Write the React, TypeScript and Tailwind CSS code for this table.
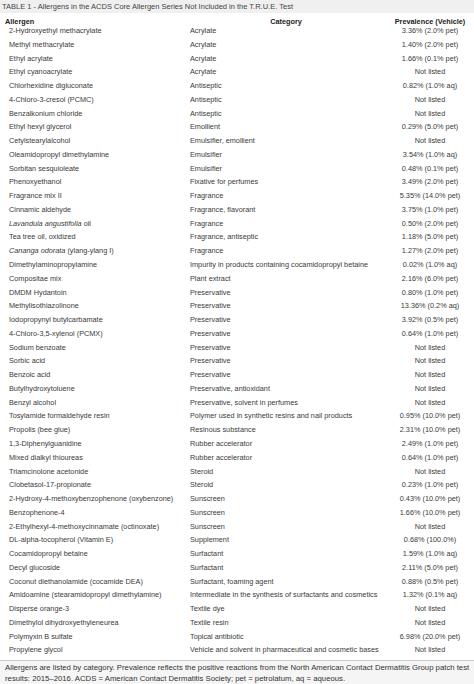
const rows: [string, string, string, boolean?][] = [
  ["2-Hydroxyethyl methacrylate", "Acrylate", "3.36% (2.0% pet)"],
  ["Methyl methacrylate", "Acrylate", "1.40% (2.0% pet)"],
  ["Ethyl acrylate", "Acrylate", "1.66% (0.1% pet)"],
  ["Ethyl cyanoacrylate", "Acrylate", "Not listed"],
  ["Chlorhexidine digluconate", "Antiseptic", "0.82% (1.0% aq)"],
  ["4-Chloro-3-cresol (PCMC)", "Antiseptic", "Not listed"],
  ["Benzalkonium chloride", "Antiseptic", "Not listed"],
  ["Ethyl hexyl glycerol", "Emollient", "0.29% (5.0% pet)"],
  ["Cetylstearylalcohol", "Emulsifier, emollient", "Not listed"],
  ["Oleamidopropyl dimethylamine", "Emulsifier", "3.54% (1.0% aq)"],
  ["Sorbitan sesquioleate", "Emulsifier", "0.48% (0.1% pet)"],
  ["Phenoxyethanol", "Fixative for perfumes", "3.49% (2.0% pet)"],
  ["Fragrance mix II", "Fragrance", "5.35% (14.0% pet)"],
  ["Cinnamic aldehyde", "Fragrance, flavorant", "3.75% (1.0% pet)"],
  ["Lavandula angustifolia oil", "Fragrance", "0.50% (2.0% pet)", true],
  ["Tea tree oil, oxidized", "Fragrance, antiseptic", "1.18% (5.0% pet)"],
  ["Cananga odorata (ylang-ylang I)", "Fragrance", "1.27% (2.0% pet)", true],
  ["Dimethylaminopropylamine", "Impurity in products containing cocamidopropyl betaine", "0.02% (1.0% aq)"],
  ["Compositae mix", "Plant extract", "2.16% (6.0% pet)"],
  ["DMDM Hydantoin", "Preservative", "0.80% (1.0% pet)"],
  ["Methylisothiazolinone", "Preservative", "13.36% (0.2% aq)"],
  ["Iodopropynyl butylcarbamate", "Preservative", "3.92% (0.5% pet)"],
  ["4-Chloro-3,5-xylenol (PCMX)", "Preservative", "0.64% (1.0% pet)"],
  ["Sodium benzoate", "Preservative", "Not listed"],
  ["Sorbic acid", "Preservative", "Not listed"],
  ["Benzoic acid", "Preservative", "Not listed"],
  ["Butylhydroxytoluene", "Preservative, antioxidant", "Not listed"],
  ["Benzyl alcohol", "Preservative, solvent in perfumes", "Not listed"],
  ["Tosylamide formaldehyde resin", "Polymer used in synthetic resins and nail products", "0.95% (10.0% pet)"],
  ["Propolis (bee glue)", "Resinous substance", "2.31% (10.0% pet)"],
  ["1,3-Diphenylguanidine", "Rubber accelerator", "2.49% (1.0% pet)"],
  ["Mixed dialkyl thioureas", "Rubber accelerator", "0.64% (1.0% pet)"],
  ["Triamcinolone acetonide", "Steroid", "Not listed"],
  ["Clobetasol-17-propionate", "Steroid", "0.23% (1.0% pet)"],
  ["2-Hydroxy-4-methoxybenzophenone (oxybenzone)", "Sunscreen", "0.43% (10.0% pet)"],
  ["Benzophenone-4", "Sunscreen", "1.66% (10.0% pet)"],
  ["2-Ethylhexyl-4-methoxycinnamate (octinoxate)", "Sunscreen", "Not listed"],
  ["DL-alpha-tocopherol (Vitamin E)", "Supplement", "0.68% (100.0%)"],
  ["Cocamidopropyl betaine", "Surfactant", "1.59% (1.0% aq)"],
  ["Decyl glucoside", "Surfactant", "2.11% (5.0% pet)"],
  ["Coconut diethanolamide (cocamide DEA)", "Surfactant, foaming agent", "0.88% (0.5% pet)"],
  ["Amidoamine (stearamidopropyl dimethylamine)", "Intermediate in the synthesis of surfactants and cosmetics", "1.32% (0.1% aq)"],
  ["Disperse orange-3", "Textile dye", "Not listed"],
  ["Dimethylol dihydroxyethyleneurea", "Textile resin", "Not listed"],
  ["Polymyxin B sulfate", "Topical antibiotic", "6.98% (20.0% pet)"],
  ["Propylene glycol", "Vehicle and solvent in pharmaceutical and cosmetic bases", "Not listed"],
]

export default function App() {
  return (
    <div className="w-[474px] h-[684px] bg-white text-[#3a3a3a] text-[7.3px] overflow-hidden" style={{ fontFamily: '"Liberation Sans", Arial, sans-serif' }}>
      <div className="h-[13px] bg-[#f0f0f0] pl-[2px] leading-[13px] text-[7.5px] text-[#444]">
        TABLE 1 - Allergens in the ACDS Core Allergen Series Not Included in the T.R.U.E. Test
      </div>
      <div className="grid grid-cols-[186px_200px_1fr] h-[11px] leading-[17px] font-bold text-[#222]">
        <div className="pl-[5px]">Allergen</div>
        <div className="text-center">Category</div>
        <div className="text-center">Prevalence (Vehicle)</div>
      </div>
      <div className="flex flex-col">
        {rows.map(([a, c, p, it]) => (
          <div key={a} className="grid grid-cols-[186px_200px_1fr] h-[13.78px] leading-[13.78px] whitespace-nowrap">
            <div className="pl-[9px]">
              {it ? (
                <>
                  <span className="italic">{a.split(" ").slice(0, 2).join(" ")}</span>
                  <span> {a.split(" ").slice(2).join(" ")}</span>
                </>
              ) : a}
            </div>
            <div className="pl-[4px]">{c}</div>
            <div className="text-center">{p}</div>
          </div>
        ))}
      </div>
      <div className="mt-[3px] h-[30px] border-t border-[#ccc] bg-[#f5f5f5] pl-[5px] pr-[4px] pt-[1px] leading-[11px] text-[7.75px] text-[#333]">
        Allergens are listed by category. Prevalence reflects the positive reactions from the North American Contact Dermatitis Group patch test results: 2015–2016. ACDS = American Contact Dermatitis Society; pet = petrolatum, aq = aqueous.
      </div>
    </div>
  )
}
